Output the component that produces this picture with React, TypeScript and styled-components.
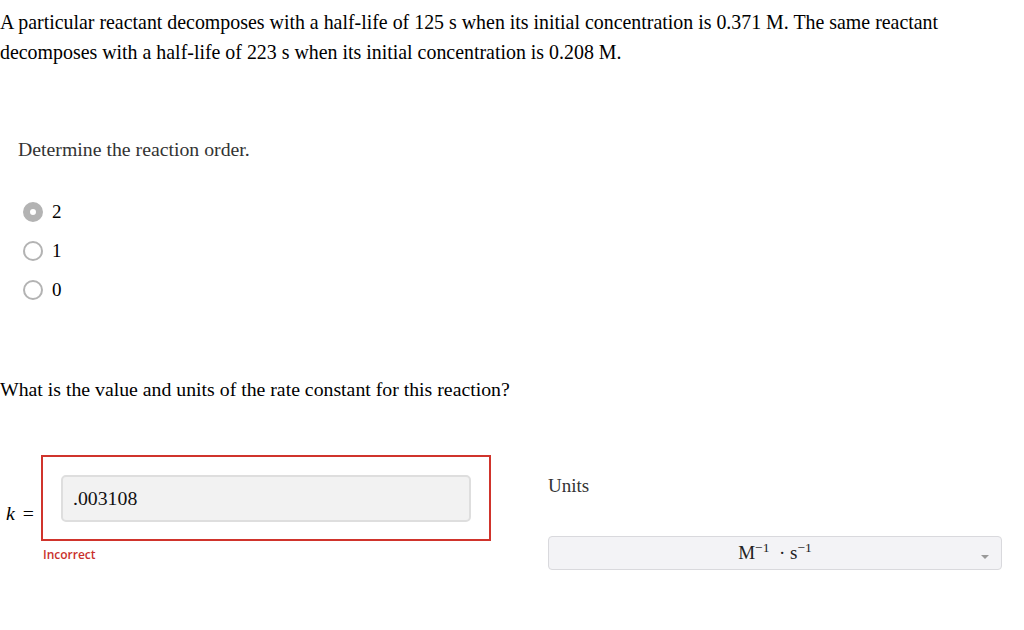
import React from "react";
import styled, { createGlobalStyle } from "styled-components";

const Global = createGlobalStyle`
  html, body { margin: 0; padding: 0; background: #fff; }
  body { font-family: "Liberation Serif", "Times New Roman", serif; color: #000; }
`;

const Page = styled.div`
  width: 1024px;
  height: 630px;
  overflow: hidden;
  padding: 7px 0 0 0;
  box-sizing: border-box;
`;

const Intro = styled.p`
  margin: 0;
  font-size: 19.9px;
  line-height: 30px;
  width: 1000px;
`;

const Prompt = styled.p<{ $indent?: number; $color?: string }>`
  margin: 0;
  font-size: 19.8px;
  line-height: 24px;
  padding-left: ${(p) => p.$indent ?? 0}px;
  color: ${(p) => p.$color ?? "#000"};
`;

const Section = styled.div<{ $top: number }>`
  margin-top: ${(p) => p.$top}px;
`;

const RadioList = styled.div`
  display: flex;
  flex-direction: column;
  gap: 19px;
  padding-left: 23px;
  margin-top: 41px;
`;

const RadioRow = styled.label`
  display: flex;
  align-items: center;
  gap: 9px;
  font-size: 19px;
  line-height: 20px;
  color: #000;
`;

const Circle = styled.span<{ $checked?: boolean }>`
  width: 20px;
  height: 20px;
  box-sizing: border-box;
  border-radius: 50%;
  border: ${(p) => (p.$checked ? "7px solid #b3b3b3" : "2px solid #b3b3b3")};
  background: #fff;
`;

const AnswerRow = styled.div`
  display: flex;
  align-items: flex-start;
  margin-top: 54px;
`;

const KLabel = styled.div`
  width: 41px;
  padding-left: 6px;
  box-sizing: border-box;
  margin-top: 47px;
  font-size: 19.8px;
  line-height: 22px;
  white-space: nowrap;
  display: flex;
  gap: 8px;
  i { font-style: italic; }
`;

const AnswerCol = styled.div`
  display: flex;
  flex-direction: column;
`;

const ErrorBox = styled.div`
  width: 450px;
  height: 86px;
  box-sizing: border-box;
  border: 2px solid #d0342c;
  padding: 18px 18px;
`;

const Input = styled.div`
  height: 47px;
  box-sizing: border-box;
  background: #f2f2f2;
  border: 2px solid #dedede;
  border-radius: 5px;
  padding: 0 10px;
  display: flex;
  align-items: center;
  font-size: 19.8px;
  color: #111;
`;

const ErrorText = styled.div`
  margin-top: 6px;
  padding-left: 2px;
  font-family: "Open Sans", "Liberation Sans", sans-serif;
  font-weight: 600;
  font-size: 12px;
  line-height: 16px;
  color: #c9302c;
`;

const UnitsCol = styled.div`
  margin-left: 57px;
  display: flex;
  flex-direction: column;
`;

const UnitsLabel = styled.div`
  font-size: 19px;
  line-height: 22px;
  color: #333;
  margin-top: 20px;
`;

const Select = styled.div`
  margin-top: 39px;
  width: 454px;
  height: 34px;
  box-sizing: border-box;
  background: #f3f3f6;
  border: 1px solid #d9d9dd;
  border-radius: 4px;
  position: relative;
  display: flex;
  align-items: center;
  justify-content: center;
  font-size: 19px;
  color: #222;
`;

const Sup = styled.sup`
  font-size: 13.5px;
  line-height: 0;
  vertical-align: 7px;
`;

const Caret = styled.span`
  position: absolute;
  right: 12px;
  top: 18px;
  width: 0;
  height: 0;
  border-left: 4px solid transparent;
  border-right: 4px solid transparent;
  border-top: 4px solid #999;
`;

export default function App() {
  return (
    <Page>
      <Global />
      <Intro>
        A particular reactant decomposes with a half-life of 125 s when its initial concentration is 0.371 M. The same
        reactant decomposes with a half-life of 223 s when its initial concentration is 0.208 M.
      </Intro>
      <Section $top={70}>
        <Prompt $indent={18} $color="#333">Determine the reaction order.</Prompt>
      </Section>
      <RadioList>
        <RadioRow><Circle $checked />2</RadioRow>
        <RadioRow><Circle />1</RadioRow>
        <RadioRow><Circle />0</RadioRow>
      </RadioList>
      <Section $top={77}>
        <Prompt>What is the value and units of the rate constant for this reaction?</Prompt>
      </Section>
      <AnswerRow>
        <KLabel><i>k</i><span>=</span></KLabel>
        <AnswerCol>
          <ErrorBox>
            <Input>.003108</Input>
          </ErrorBox>
          <ErrorText>Incorrect</ErrorText>
        </AnswerCol>
        <UnitsCol>
          <UnitsLabel>Units</UnitsLabel>
          <Select>
            <span>
              M<Sup>−1</Sup>&nbsp;&nbsp;·&nbsp;s<Sup>−1</Sup>
            </span>
            <Caret />
          </Select>
        </UnitsCol>
      </AnswerRow>
    </Page>
  );
}
